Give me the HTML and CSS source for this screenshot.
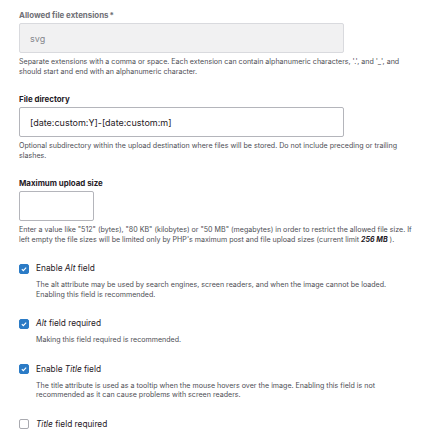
FILE: index.html
```html
<!DOCTYPE html>
<html lang="en">
<head>
    <meta charset="UTF-8">
    <meta name="viewport" content="width=device-width, initial-scale=1.0">
    <title>File field settings</title>
    <link rel="stylesheet" href="styles.css">
</head>
<body>
    <form class="settings">
        <div class="form-item">
            <label class="form-label is-disabled" for="ext">Allowed file extensions<span class="req">*</span></label>
            <input class="form-text is-disabled" type="text" id="ext" value="svg" disabled>
            <div class="description">Separate extensions with a comma or space. Each extension can contain alphanumeric characters, '.', and '_', and should start and end with an alphanumeric character.</div>
        </div>

        <div class="form-item">
            <label class="form-label" for="dir">File directory</label>
            <input class="form-text" type="text" id="dir" value="[date:custom:Y]-[date:custom:m]">
            <div class="description">Optional subdirectory within the upload destination where files will be stored. Do not include preceding or trailing slashes.</div>
        </div>

        <div class="form-item">
            <label class="form-label" for="size">Maximum upload size</label>
            <input class="form-text small" type="text" id="size">
            <div class="description">Enter a value like "512" (bytes), "80 KB" (kilobytes) or "50 MB" (megabytes) in order to restrict the allowed file size. If left empty the file sizes will be limited only by PHP's maximum post and file upload sizes (current limit <em class="limit">256 MB</em>).</div>
        </div>

        <div class="check-item">
            <label class="check-label"><span class="box checked"></span><span>Enable <em>Alt</em> field</span></label>
            <div class="description">The alt attribute may be used by search engines, screen readers, and when the image cannot be loaded. Enabling this field is recommended.</div>
        </div>

        <div class="check-item">
            <label class="check-label"><span class="box checked"></span><span><em>Alt</em> field required</span></label>
            <div class="description">Making this field required is recommended.</div>
        </div>

        <div class="check-item">
            <label class="check-label"><span class="box checked"></span><span>Enable <em>Title</em> field</span></label>
            <div class="description">The title attribute is used as a tooltip when the mouse hovers over the image. Enabling this field is not recommended as it can cause problems with screen readers.</div>
        </div>

        <div class="check-item">
            <label class="check-label"><span class="box"></span><span><em>Title</em> field required</span></label>
        </div>
    </form>
</body>
</html>
```

FILE: styles.css
```css
body {
    margin: 0;
    padding: 10px 19px 0 19px;
    background-color: #ffffff;
    font-family: Inter, "Liberation Sans", Arial, sans-serif;
    color: #1f2026;
}
.settings {
    display: flex;
    flex-direction: column;
    width: 394px;
}
.form-item {
    display: flex;
    flex-direction: column;
    align-items: flex-start;
    margin-bottom: 18px;
}
.form-label {
    font-size: 7.9px;
    line-height: 10px;
    font-weight: bold;
    margin-bottom: 3px;
}
.form-label.is-disabled {
    color: #6f7076;
}
.req {
    margin-left: 1px;
}
.form-text {
    box-sizing: border-box;
    width: 325px;
    height: 30px;
    margin: 0;
    padding: 0 10px;
    border: 1px solid #b4b5bb;
    border-radius: 2px;
    background-color: #fff;
    font-family: inherit;
    font-size: 9px;
    color: #1f2026;
}
.form-text.is-disabled {
    background-color: #f1f1f2;
    border-color: #d9dade;
    color: #85878d;
}
.form-text.small {
    width: 75px;
}
.description {
    margin-top: 4px;
    font-size: 7.1px;
    line-height: 9.5px;
    color: #4d4e54;
}
.description .limit {
    display: inline-block;
    font-weight: bold;
    margin-right: 2px;
    color: #1f2026;
}
.form-item:nth-child(3) .description {
    line-height: 10px;
}
.check-item {
    display: flex;
    flex-direction: column;
    padding-bottom: 19px;
}
.check-label {
    display: flex;
    align-items: center;
    font-size: 8.3px;
    line-height: 11px;
    color: #1f2026;
}
.box {
    box-sizing: border-box;
    width: 10px;
    height: 10px;
    margin-right: 7px;
    border: 1px solid #a9aab0;
    border-radius: 2px;
    background-color: #fff;
}
.box.checked {
    border-color: #2b7bc6;
    background-color: #2b7bc6;
    background-image: url("data:image/svg+xml,%3Csvg xmlns='http://www.w3.org/2000/svg' viewBox='0 0 10 10'%3E%3Cpath d='M2.3 5.2l1.8 1.8 3.6-3.8' fill='none' stroke='%23fff' stroke-width='1.4'/%3E%3C/svg%3E");
    background-size: 100% 100%;
}
.check-item .description {
    margin-top: 6px;
    margin-left: 17px;
}
```
